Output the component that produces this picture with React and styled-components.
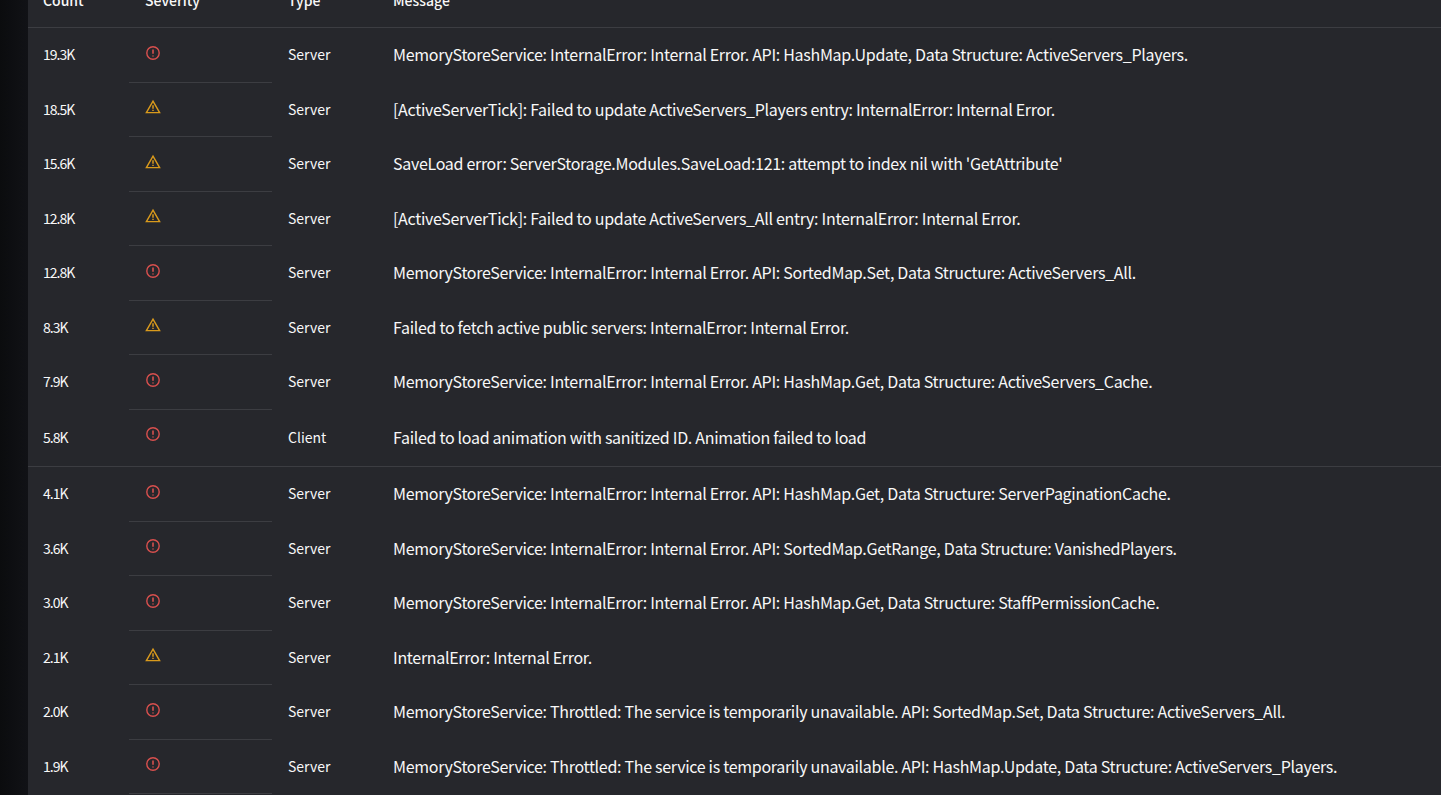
import React from "react";
import styled, { createGlobalStyle } from "styled-components";

const Global = createGlobalStyle`
  html, body { margin: 0; padding: 0; height: 100%; overflow: hidden; background: #26272c; }
  #root { height: 795px; overflow: hidden; }
`;

const Page = styled.div`
  display: flex;
  height: 795px;
  overflow: hidden;
  background: #26272c;
  font-family: "Noto Sans CJK KR", "Noto Sans", sans-serif;
  color: #f8f8f8;
`;

const Rail = styled.div`
  flex: 0 0 28px;
  background: linear-gradient(90deg, #0b0c0e 0%, #111216 100%);
`;

const Main = styled.div`
  flex: 1;
  min-width: 0;
`;

const Table = styled.div`
  margin-top: -25px;
  display: grid;
  grid-template-columns: 101px 143px 105px 1fr;
`;

const HeadCell = styled.div`
  height: 53px;
  box-sizing: border-box;
  padding: 15px 0 0 ${(p) => p.$pad}px;
  font-size: 14px;
  line-height: 20px;
  font-weight: 500;
  border-bottom: 1px solid #3c3d42;
`;

const Row = styled.div`
  display: contents;
`;

const Cell = styled.div`
  height: ${(p) => p.$h}px;
  box-sizing: border-box;
  display: flex;
  align-items: center;
  padding: 0 0 2.5px ${(p) => p.$pad}px;
  font-size: ${(p) => p.$size}px;
  letter-spacing: ${(p) => p.$track || 0}px;
  line-height: 20px;
  white-space: nowrap;
`;

const SeverityCell = styled.div`
  height: ${(p) => p.$h}px;
  box-sizing: border-box;
  padding: 16.6px 0 0 16px;
  border-bottom: ${(p) => (p.$line ? "1px solid #3c3d42" : "none")};
  display: flex;
  align-items: flex-start;
`;

const Divider = styled.div`
  grid-column: 1 / -1;
  height: 1px;
  background: #3c3d42;
`;

const ErrorIcon = () => (
  <svg width="16" height="16" viewBox="0 0 16 16" fill="none" stroke="#d9504e" strokeWidth="1.4">
    <circle cx="8" cy="8" r="6.2" />
    <path d="M8 4.6v4.2" strokeWidth="1.6" />
    <path d="M8 10.4v1.2" strokeWidth="1.6" />
  </svg>
);

const WarnIcon = () => (
  <svg width="16" height="16" viewBox="0 0 16 16" fill="none" stroke="#d99a1c" strokeWidth="1.4">
    <path d="M8 2.2 L14.6 13.6 H1.4 Z" strokeLinejoin="miter" />
    <path d="M8 6.2v3.6" strokeWidth="1.5" />
    <path d="M8 10.8v1.3" strokeWidth="1.5" />
  </svg>
);

const first = [
  ["19.3K", "e", "Server", "MemoryStoreService: InternalError: Internal Error. API: HashMap.Update, Data Structure: ActiveServers_Players."],
  ["18.5K", "w", "Server", "[ActiveServerTick]: Failed to update ActiveServers_Players entry: InternalError: Internal Error."],
  ["15.6K", "w", "Server", "SaveLoad error: ServerStorage.Modules.SaveLoad:121: attempt to index nil with 'GetAttribute'"],
  ["12.8K", "w", "Server", "[ActiveServerTick]: Failed to update ActiveServers_All entry: InternalError: Internal Error."],
  ["12.8K", "e", "Server", "MemoryStoreService: InternalError: Internal Error. API: SortedMap.Set, Data Structure: ActiveServers_All."],
  ["8.3K", "w", "Server", "Failed to fetch active public servers: InternalError: Internal Error."],
  ["7.9K", "e", "Server", "MemoryStoreService: InternalError: Internal Error. API: HashMap.Get, Data Structure: ActiveServers_Cache."],
  ["5.8K", "e", "Client", "Failed to load animation with sanitized ID. Animation failed to load"],
];
const second = [
  ["4.1K", "e", "Server", "MemoryStoreService: InternalError: Internal Error. API: HashMap.Get, Data Structure: ServerPaginationCache."],
  ["3.6K", "e", "Server", "MemoryStoreService: InternalError: Internal Error. API: SortedMap.GetRange, Data Structure: VanishedPlayers."],
  ["3.0K", "e", "Server", "MemoryStoreService: InternalError: Internal Error. API: HashMap.Get, Data Structure: StaffPermissionCache."],
  ["2.1K", "w", "Server", "InternalError: Internal Error."],
  ["2.0K", "e", "Server", "MemoryStoreService: Throttled: The service is temporarily unavailable. API: SortedMap.Set, Data Structure: ActiveServers_All."],
  ["1.9K", "e", "Server", "MemoryStoreService: Throttled: The service is temporarily unavailable. API: HashMap.Update, Data Structure: ActiveServers_Players."],
];

const LogRow = ({ r, h, line }) => (
  <Row>
    <Cell $h={h} $pad={15} $size={14} $track={-1}>{r[0]}</Cell>
    <SeverityCell $h={h} $line={line}>{r[1] === "e" ? <ErrorIcon /> : <WarnIcon />}</SeverityCell>
    <Cell $h={h} $pad={16} $size={14}>{r[2]}</Cell>
    <Cell $h={h} $pad={16} $size={16} $track={-0.3}>{r[3]}</Cell>
  </Row>
);

export default function App() {
  return (
    <Page>
      <Global />
      <Rail />
      <Main>
        <Table>
          <HeadCell $pad={15}>Count</HeadCell>
          <HeadCell $pad={16}>Severity</HeadCell>
          <HeadCell $pad={16}>Type</HeadCell>
          <HeadCell $pad={16}>Message</HeadCell>
          {first.map((r, i) => (
            <LogRow key={i} r={r} h={i === 7 ? 56.5 : 54.5} line={i < 7} />
          ))}
          <Divider />
          {second.map((r, i) => (
            <LogRow key={i} r={r} h={54.5} line />
          ))}
        </Table>
      </Main>
    </Page>
  );
}
